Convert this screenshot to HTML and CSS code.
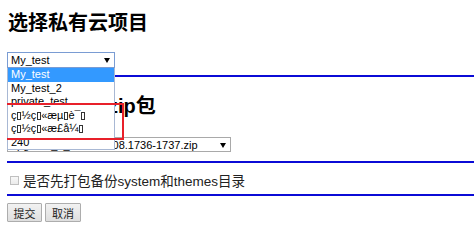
FILE: index.html
```html
<!DOCTYPE html>
<html lang="zh">
<head>
    <meta charset="UTF-8">
    <meta name="viewport" content="width=device-width, initial-scale=1.0">
    <title>选择私有云项目</title>
    <link rel="stylesheet" href="styles.css">
</head>
<body>
    <h1 class="page-title">选择私有云项目</h1>

    <form class="deploy-form">
        <div class="select-wrap project-wrap">
            <select class="field-select project-select">
                <option>My_test</option>
                <option>My_test_2</option>
                <option>private_test</option>
                <option>240</option>
            </select>
            <!-- open dropdown list -->
            <ul class="select-list">
                <li class="active">My_test</li>
                <li>My_test_2</li>
                <li>private_test</li>
                <li>ç<span class="tofu"></span>½ç<span class="tofu"></span>«æµ<span class="tofu"></span>è¯<span class="tofu"></span></li>
                <li>ç<span class="tofu"></span>½ç<span class="tofu"></span>«æ£å¼<span class="tofu"></span></li>
                <li>240</li>
            </ul>
            <div class="mark"></div>
        </div>

        <hr class="rule rule-first">

        <h2 class="section-title">选择上传的zip包</h2>

        <div class="select-wrap package-wrap">
            <select class="field-select package-select">
                <option>upgrade_1_2017.08.08.1736-1737.zip</option>
            </select>
        </div>

        <hr class="rule rule-second">

        <label class="check-row">
            <input type="checkbox" class="check-box">
            <span>是否先打包备份system和themes目录</span>
        </label>

        <hr class="rule rule-third">

        <div class="actions">
            <button type="submit" class="btn">提交</button>
            <button type="button" class="btn">取消</button>
        </div>
    </form>
</body>
</html>
```

FILE: styles.css
```css
* {
    margin: 0;
    padding: 0;
    box-sizing: border-box;
}

body {
    font-family: 'Liberation Sans', 'Noto Sans CJK SC', sans-serif;
    background: #fff;
    color: #000;
    margin: 0 0 0 7px;
    overflow: hidden;
}

.page-title {
    font-family: 'Noto Sans CJK SC', sans-serif;
    font-size: 20px;
    font-weight: 700;
    line-height: 24px;
    margin-top: 10px;
    padding-left: 1px;
}

.select-wrap {
    position: relative;
}

.select-wrap::after {
    content: '';
    position: absolute;
    top: 50%;
    margin-top: -2px;
    border-left: 3px solid transparent;
    border-right: 3px solid transparent;
    border-top: 5px solid #000;
}

.project-wrap {
    width: 108px;
    margin-top: 18px;
}

.project-wrap::after {
    left: 97px;
}

.package-wrap {
    width: 224px;
    margin-top: 19px;
}

.package-wrap::after {
    left: 213px;
}

.field-select {
    -webkit-appearance: none;
    appearance: none;
    display: block;
    width: 100%;
    font-family: 'Liberation Sans', 'Noto Sans CJK SC', sans-serif;
    font-size: 11px;
    color: #000;
    background: #fff;
    border-radius: 0;
    padding: 0 0 0 3px;
    outline: none;
}

.project-select {
    height: 16px;
    border: 1px solid #7a9cd3;
}

.package-select {
    height: 15px;
    border: 1px solid #a9a9a9;
}

.select-list {
    list-style: none;
    position: absolute;
    top: 16px;
    left: 0;
    width: 108px;
    background: #fff;
    border: 1px solid #a8b8d4;
    border-top: none;
    font-size: 11px;
    z-index: 10;
}

.select-list li {
    height: 13.5px;
    line-height: 13.5px;
    padding-left: 3px;
    white-space: nowrap;
    overflow: hidden;
}

.select-list li.active {
    background: #3399ff;
    color: #fff;
}

.tofu {
    display: inline-block;
    width: 4px;
    height: 8px;
    border: 1px solid #333;
    margin: 0 0.5px;
    vertical-align: -1px;
}

.mark {
    position: absolute;
    left: -3px;
    top: 51px;
    width: 120px;
    height: 37px;
    border: 2px solid #e8202a;
    z-index: 11;
}

.rule {
    border: none;
    height: 2px;
    background: #0b0bd6;
}

.rule-first {
    margin-top: 7px;
}

.section-title {
    font-family: 'Liberation Sans', 'Noto Sans CJK SC', sans-serif;
    font-size: 20px;
    font-weight: 700;
    line-height: 24px;
    margin-top: 17px;
    padding-left: 1px;
}

.rule-second {
    margin-top: 9px;
}

.check-row {
    display: flex;
    align-items: center;
    gap: 4px;
    height: 14px;
    margin-top: 10px;
    padding-left: 3px;
    font-family: 'Liberation Sans', 'Noto Sans CJK SC', sans-serif;
    font-size: 13.5px;
    color: #222;
}

.check-box {
    -webkit-appearance: none;
    appearance: none;
    width: 9px;
    height: 9px;
    border: 1px solid #c0c0c0;
    background: linear-gradient(#f8f8f8, #ebebeb);
}

.rule-third {
    margin-top: 7px;
}

.actions {
    display: flex;
    gap: 3px;
    margin-top: 7px;
}

.btn {
    height: 19px;
    width: 35px;
    font-family: 'Noto Sans CJK SC', sans-serif;
    font-size: 11px;
    color: #222;
    background: linear-gradient(#f2f2f2, #dedede);
    border: 1px solid #adadad;
    border-radius: 1px;
    cursor: pointer;
}

.btn + .btn {
    width: 36px;
}
```
